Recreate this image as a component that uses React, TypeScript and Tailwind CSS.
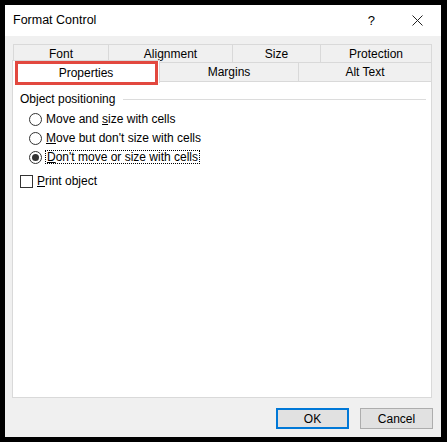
import React from "react";

const FONT = { fontFamily: '"Liberation Sans", Arial, sans-serif' };

function Radio({ checked }: { checked?: boolean }) {
  return (
    <span className="flex h-[13px] w-[13px] items-center justify-center rounded-full border border-[#333] bg-white">
      {checked && <span className="h-[7px] w-[7px] rounded-full bg-[#333]" />}
    </span>
  );
}

export default function App() {
  const top = [
    { label: "Font", w: "w-[95px]" },
    { label: "Alignment", w: "w-[124px]" },
    { label: "Size", w: "w-[88px]" },
    { label: "Protection", w: "w-[112px] border-r" },
  ];

  return (
    <div style={FONT} className="flex h-[442px] w-[447px] bg-black pb-[5px] pl-[5px] pr-[6px] pt-[5px] text-[12px] text-black">
      <div className="flex flex-1 flex-col bg-[#f0f0f0]">
        {/* title bar */}
        <div className="flex h-[31px] items-center bg-white pl-[8px]">
          <span className="text-[12.5px]">Format Control</span>
          <span className="ml-auto text-[13px]">?</span>
          <svg width="11" height="11" viewBox="0 0 11 11" className="ml-[37px] mr-[18px]">
            <path d="M0.5 0.5 L10.5 10.5 M10.5 0.5 L0.5 10.5" stroke="#222" strokeWidth="1" />
          </svg>
        </div>

        <div className="flex flex-1 flex-col pl-[7px] pr-[9px] pt-[7px]">
          {/* top tab row */}
          <div className="ml-[1px] flex h-[19px] pt-[1px]">
            {top.map((t) => (
              <div key={t.label} className={`flex items-center justify-center border-l border-t border-[#d9d9d9] ${t.w}`}>
                {t.label}
              </div>
            ))}
          </div>
          {/* bottom tab row */}
          <div className="relative z-10 flex h-[19px]">
            <div className="relative -mb-[2px] -mt-[2px] flex w-[148px] items-center justify-center border-l border-r border-t border-[#d9d9d9] bg-white pt-[1px]">
              Properties
              <div className="pointer-events-none absolute -bottom-[2px] left-[2px] right-[1px] top-0 border-[3px] border-[#e2483f]" />
            </div>
            <div className="flex w-[138px] items-center justify-center border-t border-[#d9d9d9]">Margins</div>
            <div className="flex w-[134px] items-center justify-center border-l border-r border-t border-[#d9d9d9]">
              Alt Text
            </div>
          </div>

          {/* panel */}
          <div className="flex h-[317px] flex-col border border-[#d9d9d9] bg-white pl-[7px] pr-[5px] pt-[8px]">
            <div className="flex items-center">
              <span>Object positioning</span>
              <span className="ml-[8px] h-px flex-1 bg-[#dcdcdc]" />
            </div>
            <div className="mt-[4px] flex flex-col gap-[5px] pl-[9px]">
              <div className="flex h-[14px] items-center gap-[4px]">
                <Radio />
                <span>
                  Move and <u>s</u>ize with cells
                </span>
              </div>
              <div className="flex h-[14px] items-center gap-[4px]">
                <Radio />
                <span>
                  <u>M</u>ove but don't size with cells
                </span>
              </div>
              <div className="flex h-[14px] items-center gap-[3px]">
                <Radio checked />
                <span className="border border-dotted border-black px-[1px] leading-[12px]">
                  <u>D</u>on't move or size with cells
                </span>
              </div>
            </div>
            <div className="mt-[8px] flex items-center gap-[4px]">
              <span className="h-[13px] w-[13px] border border-[#333] bg-white" />
              <span>
                <u>P</u>rint object
              </span>
            </div>
          </div>

          {/* buttons */}
          <div className="-mr-[1px] mt-[10px] flex justify-end gap-[11px]">
            <button className="h-[21px] w-[73px] border-2 border-[#0078d7] bg-[#e1e1e1]">OK</button>
            <button className="h-[21px] w-[73px] border border-[#adadad] bg-[#e1e1e1]">Cancel</button>
          </div>
        </div>
      </div>
    </div>
  );
}
